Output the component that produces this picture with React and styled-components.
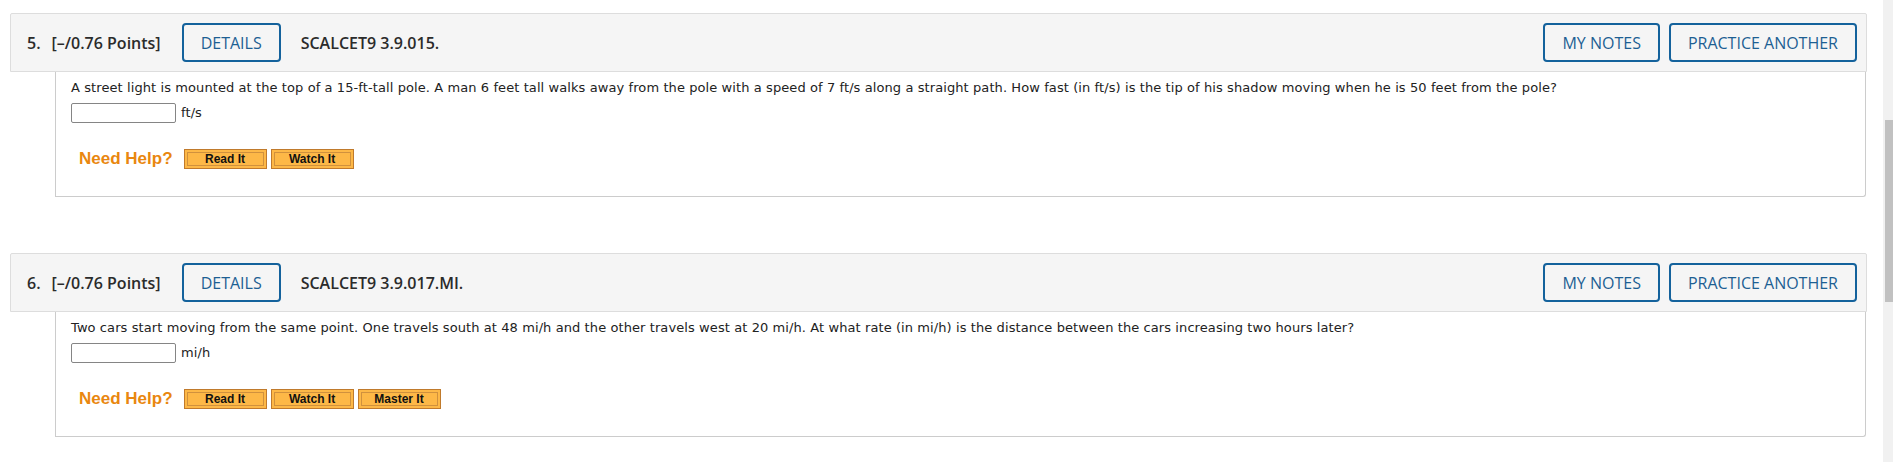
import styled, { createGlobalStyle } from "styled-components";

const GlobalStyle = createGlobalStyle`
  html, body {
    margin: 0;
    padding: 0;
    background: #fff;
    overflow: hidden;
  }
`;

const Page = styled.div`
  display: flex;
  flex-direction: row;
  width: 1893px;
  height: 462px;
`;

const Main = styled.div`
  flex: 1;
  display: flex;
  flex-direction: column;
  gap: 56px;
  padding: 13px 16px 0 10px;
`;

const ScrollTrack = styled.div`
  width: 10px;
  height: 462px;
  background: #f1f1f1;
  display: flex;
  flex-direction: column;
  padding: 120px 0 0 2px;
  box-sizing: border-box;
`;

const ScrollThumb = styled.div`
  width: 8px;
  height: 182px;
  background: #c1c1c1;
`;

const Card = styled.div`
  display: flex;
  flex-direction: column;
`;

const Header = styled.div`
  display: flex;
  flex-direction: row;
  align-items: center;
  height: 59px;
  box-sizing: border-box;
  background: #f5f5f5;
  border: 1px solid #dddddd;
  border-radius: 2px 2px 0 0;
  padding: 0 9px 0 16px;
  font-family: "Open Sans", "Noto Sans", sans-serif;
  font-size: 16px;
  font-weight: 600;
  color: #2b2b2b;
`;

const Number = styled.span`
  margin-right: 11px;
`;

const Points = styled.span`
  margin-right: 21px;
`;

const Code = styled.span`
  margin-left: 20px;
  flex: 1;
`;

const OutlineButton = styled.button`
  height: 39px;
  box-sizing: border-box;
  padding: 0 17px;
  background: transparent;
  border: 2px solid #14629c;
  border-radius: 4px;
  color: #1d5f93;
  font-family: "Open Sans", "Noto Sans", sans-serif;
  font-size: 16px;
  font-weight: 400;
  cursor: pointer;
  margin-left: ${(props) => props.gap || 0}px;
`;

const Body = styled.div`
  margin: 0 1px 0 45px;
  border: 1px solid #cccccc;
  border-top: none;
  border-radius: 0 0 3px 0;
  padding: 7px 15px 27px 15px;
  font-family: "DejaVu Sans", Verdana, sans-serif;
  font-size: 13px;
  line-height: 18px;
  letter-spacing: 0.09px;
  color: #222;
`;

const Question = styled.div``;

const AnswerRow = styled.div`
  display: flex;
  flex-direction: row;
  align-items: center;
  margin-top: 6px;
  height: 20px;
`;

const AnswerInput = styled.input`
  width: 105px;
  height: 20px;
  box-sizing: border-box;
  border: 1px solid #858585;
  border-radius: 2px;
  margin: 0 5px 0 0;
  padding: 0 4px;
  background: #fff;
`;

const HelpRow = styled.div`
  display: flex;
  flex-direction: row;
  align-items: center;
  margin-top: 26px;
  padding-left: 8px;
  height: 20px;
`;

const HelpLabel = styled.span`
  font-family: "Liberation Sans", Arial, sans-serif;
  font-weight: bold;
  font-size: 17px;
  letter-spacing: 0;
  color: #e9870f;
  margin-right: 11px;
`;

const HelpButton = styled.button`
  width: 83px;
  height: 20px;
  box-sizing: border-box;
  margin-right: 4px;
  padding: 0;
  border: 1px solid #c07a2c;
  background: #fdb847;
  box-shadow: inset 0 0 0 2px #fdb847, inset 0 0 0 3px #d0913e;
  font-family: "Liberation Sans", Arial, sans-serif;
  font-weight: bold;
  font-size: 12px;
  color: #111;
  cursor: pointer;
`;

const problems = [
  {
    num: "5.",
    code: "SCALCET9 3.9.015.",
    text: "A street light is mounted at the top of a 15-ft-tall pole. A man 6 feet tall walks away from the pole with a speed of 7 ft/s along a straight path. How fast (in ft/s) is the tip of his shadow moving when he is 50 feet from the pole?",
    unit: "ft/s",
    help: ["Read It", "Watch It"],
  },
  {
    num: "6.",
    code: "SCALCET9 3.9.017.MI.",
    text: "Two cars start moving from the same point. One travels south at 48 mi/h and the other travels west at 20 mi/h. At what rate (in mi/h) is the distance between the cars increasing two hours later?",
    unit: "mi/h",
    help: ["Read It", "Watch It", "Master It"],
  },
];

const Problem = ({ p }) => (
  <Card>
    <Header>
      <Number>{p.num}</Number>
      <Points>[–/0.76 Points]</Points>
      <OutlineButton>DETAILS</OutlineButton>
      <Code>{p.code}</Code>
      <OutlineButton>MY NOTES</OutlineButton>
      <OutlineButton gap={9}>PRACTICE ANOTHER</OutlineButton>
    </Header>
    <Body>
      <Question>{p.text}</Question>
      <AnswerRow>
        <AnswerInput type="text" />
        {p.unit}
      </AnswerRow>
      <HelpRow>
        <HelpLabel>Need Help?</HelpLabel>
        {p.help.map((h) => (
          <HelpButton key={h}>{h}</HelpButton>
        ))}
      </HelpRow>
    </Body>
  </Card>
);

const App = () => (
  <Page>
    <GlobalStyle />
    <Main>
      {problems.map((p) => (
        <Problem key={p.num} p={p} />
      ))}
    </Main>
    <ScrollTrack>
      <ScrollThumb />
    </ScrollTrack>
  </Page>
);

export default App;
